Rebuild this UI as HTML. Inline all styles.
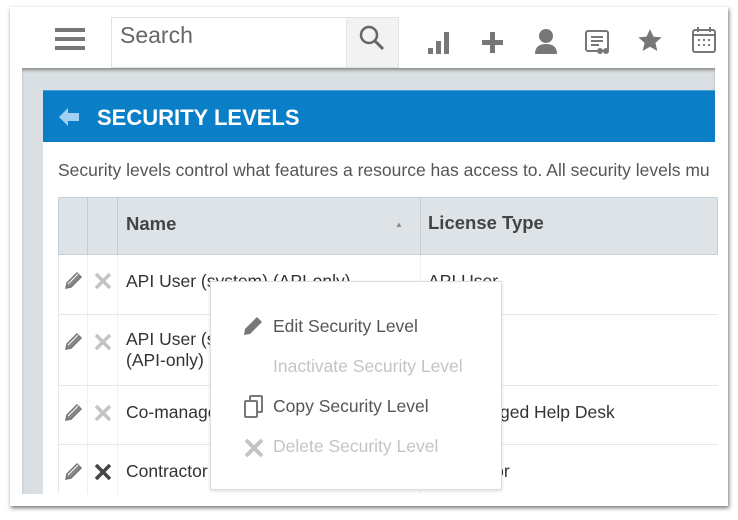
<!DOCTYPE html>
<html><head><meta charset="utf-8"><style>
*{margin:0;padding:0;box-sizing:border-box}
body{width:738px;height:520px;background:#fff;font-family:"Liberation Sans",sans-serif;position:relative;overflow:hidden}
.frame{position:absolute;left:10px;top:7px;width:718px;height:499px;background:#fff;box-shadow:1px 2px 4px rgba(0,0,0,.55);overflow:hidden}
.abs{position:absolute}
.ic{position:absolute}
.row{position:absolute;left:48px;width:660px;border-bottom:1px solid #e4e8ea}
.t{position:absolute;font-size:17.5px;color:#333;white-space:nowrap}
.menu div{position:absolute;font-size:17.5px;white-space:nowrap}
</style></head><body>
<div class="frame">
 <div class="abs" style="left:45px;top:21px;width:30px;height:4px;background:#777"></div>
 <div class="abs" style="left:45px;top:30px;width:30px;height:4px;background:#777"></div>
 <div class="abs" style="left:45px;top:39px;width:30px;height:4px;background:#777"></div>
 <div class="abs" style="left:101px;top:10px;width:288px;height:51px;border:1px solid #e2e2e2;background:#fff"></div>
 <div class="abs" style="left:336px;top:11px;width:52px;height:49px;background:#f2f2f2;border-left:1px solid #e6e6e6"></div>
 <div class="abs" style="left:110px;top:15px;font-size:23px;color:#666">Search</div>
 <svg class="ic" style="left:347px;top:16px" width="30" height="30" viewBox="0 0 30 30"><circle cx="12" cy="12" r="8" fill="none" stroke="#666" stroke-width="2.5"/><line x1="18" y1="18" x2="26" y2="26" stroke="#666" stroke-width="3"/></svg>
 <svg class="ic" style="left:416px;top:22px" width="28" height="28"><rect x="2" y="19" width="5" height="6" fill="#777"/><rect x="10" y="12" width="5" height="13" fill="#777"/><rect x="18" y="3" width="5" height="22" fill="#777"/></svg>
 <svg class="ic" style="left:470px;top:23px" width="26" height="26"><rect x="10" y="2" width="5" height="21" fill="#777"/><rect x="2" y="10" width="21" height="5" fill="#777"/></svg>
 <svg class="ic" style="left:522px;top:20px" width="28" height="30"><circle cx="14" cy="9" r="7" fill="#777"/><path d="M3 27 Q3 17 14 17 Q25 17 25 27Z" fill="#777"/></svg>
 <svg class="ic" style="left:574px;top:22px" width="28" height="28"><rect x="2" y="2" width="22" height="20" rx="2" fill="none" stroke="#777" stroke-width="2"/><line x1="7" y1="8" x2="19" y2="8" stroke="#777" stroke-width="2"/><line x1="7" y1="12" x2="19" y2="12" stroke="#777" stroke-width="2"/><line x1="7" y1="16" x2="15" y2="16" stroke="#777" stroke-width="2"/><circle cx="16" cy="22" r="3" fill="#777"/><circle cx="22" cy="22" r="3" fill="#777"/></svg>
 <svg class="ic" style="left:627px;top:21px" width="26" height="26" viewBox="0 0 24 24"><path d="M12 1l3.2 7 7.6.7-5.8 5 1.8 7.5L12 17.3 5.2 21.2 7 13.7 1.2 8.7l7.6-.7z" fill="#777"/></svg>
 <svg class="ic" style="left:681px;top:18px" width="28" height="30"><rect x="2" y="5" width="22" height="22" rx="2" fill="none" stroke="#777" stroke-width="2"/><line x1="2" y1="10" x2="24" y2="10" stroke="#777" stroke-width="2"/><rect x="6" y="2" width="2" height="5" fill="#777"/><rect x="18" y="2" width="2" height="5" fill="#777"/><g fill="#777"><rect x="7" y="14" width="2" height="2"/><rect x="12" y="14" width="2" height="2"/><rect x="17" y="14" width="2" height="2"/><rect x="7" y="19" width="2" height="2"/><rect x="12" y="19" width="2" height="2"/><rect x="17" y="19" width="2" height="2"/></g></svg>
 <div class="abs" style="left:12px;top:61px;width:693px;height:440px;background:#d9dfe2;box-shadow:inset 0 3px 3px -1px #888"></div>
 <div class="abs" style="left:33px;top:83px;width:672px;height:52px;background:#0a7fc7;border-top:1px solid #4aa0d6"></div>
 <svg class="ic" style="left:47px;top:99px" width="24" height="22"><path d="M2 11 L11 2 L11 7 L22 7 L22 15 L11 15 L11 20Z" fill="#9fd0ef"/></svg>
 <div class="abs" style="left:87px;top:98px;font-size:22px;font-weight:bold;color:#fff;white-space:nowrap">SECURITY LEVELS</div>
 <div class="abs" style="left:33px;top:135px;width:672px;height:366px;background:#fff"></div>
 <div class="abs" style="left:48px;top:153px;font-size:17.5px;color:#555;white-space:nowrap">Security levels control what features a resource has access to. All security levels mu</div>
 <div class="abs" style="left:48px;top:190px;width:660px;height:58px;background:#dde3e6;border:1px solid #c9d0d4"></div>
 <div class="abs" style="left:77px;top:190px;width:1px;height:58px;background:#c5ccd0"></div>
 <div class="abs" style="left:107px;top:190px;width:1px;height:58px;background:#c5ccd0"></div>
 <div class="abs" style="left:410px;top:190px;width:1px;height:58px;background:#c5ccd0"></div>
 <div class="abs" style="left:116px;top:206px;font-size:18.5px;font-weight:bold;color:#444">Name</div>
 <div class="abs" style="left:385px;top:213px;font-size:8px;color:#888">▲</div>
 <div class="abs" style="left:418px;top:205px;font-size:18.5px;font-weight:bold;color:#444;white-space:nowrap">License Type</div>
 <div class="abs" style="left:48px;top:248px;width:1px;height:253px;background:#e4e8ea"></div>
 <div class="abs" style="left:77px;top:248px;width:1px;height:253px;background:#eef0f1"></div>
 <div class="abs" style="left:107px;top:248px;width:1px;height:253px;background:#eef0f1"></div>
 <div class="abs" style="left:410px;top:248px;width:1px;height:253px;background:#eef0f1"></div>
 <div class="row" style="top:248px;height:60px"></div>
 <div class="row" style="top:308px;height:71px"></div>
 <div class="row" style="top:379px;height:59px"></div>
 <div class="t" style="left:116px;top:264px">API User (system) (API-only)</div>
 <div class="t" style="left:418px;top:264px">API User</div>
 <div class="t" style="left:116px;top:322px;line-height:21px">API User (system)<br>(API-only)</div>
 <div class="t" style="left:116px;top:395px">Co-managed Help Desk</div>
 <div class="t" style="left:418px;top:395px">Co-managed Help Desk</div>
 <div class="t" style="left:116px;top:454px">Contractor</div>
 <div class="t" style="left:418px;top:454px">Contractor</div>
 <svg class="ic" style="left:53px;top:264px" width="20" height="20"><path d="M3 17 L4 12 L14 2 L18 6 L8 16Z" fill="#888" stroke="#777" stroke-width="1.5"/><path d="M5 13 L15 3" stroke="#fff" stroke-width="1"/></svg>
 <svg class="ic" style="left:83px;top:264px" width="20" height="20"><path d="M3 3L17 17M17 3L3 17" stroke="#c4c4c4" stroke-width="3.5"/></svg>
 <svg class="ic" style="left:53px;top:325px" width="20" height="20"><path d="M3 17 L4 12 L14 2 L18 6 L8 16Z" fill="#888" stroke="#777" stroke-width="1.5"/><path d="M5 13 L15 3" stroke="#fff" stroke-width="1"/></svg>
 <svg class="ic" style="left:83px;top:325px" width="20" height="20"><path d="M3 3L17 17M17 3L3 17" stroke="#c4c4c4" stroke-width="3.5"/></svg>
 <svg class="ic" style="left:53px;top:396px" width="20" height="20"><path d="M3 17 L4 12 L14 2 L18 6 L8 16Z" fill="#888" stroke="#777" stroke-width="1.5"/><path d="M5 13 L15 3" stroke="#fff" stroke-width="1"/></svg>
 <svg class="ic" style="left:83px;top:396px" width="20" height="20"><path d="M3 3L17 17M17 3L3 17" stroke="#c4c4c4" stroke-width="3.5"/></svg>
 <svg class="ic" style="left:53px;top:455px" width="20" height="20"><path d="M3 17 L4 12 L14 2 L18 6 L8 16Z" fill="#888" stroke="#777" stroke-width="1.5"/><path d="M5 13 L15 3" stroke="#fff" stroke-width="1"/></svg>
 <svg class="ic" style="left:83px;top:455px" width="20" height="20"><path d="M3 3L17 17M17 3L3 17" stroke="#444" stroke-width="3.5"/></svg>
 <div class="abs" style="left:0;top:487px;width:718px;height:12px;background:#fff"></div>
 <div class="menu abs" style="left:200px;top:274px;width:292px;height:209px;background:#fff;border:1px solid #ddd;box-shadow:0 1px 3px rgba(0,0,0,.15)">
  <svg class="ic" style="left:30px;top:32px" width="24" height="24"><path d="M3 21 L4 15 L16 3 L21 8 L9 20Z" fill="#777"/></svg>
  <div style="left:62px;top:34px;color:#555">Edit Security Level</div>
  <div style="left:62px;top:74px;color:#c4c4c4">Inactivate Security Level</div>
  <svg class="ic" style="left:32px;top:112px" width="22" height="26"><rect x="7" y="2" width="12" height="16" rx="1" fill="none" stroke="#777" stroke-width="2"/><rect x="2" y="7" width="12" height="16" rx="1" fill="#fff" stroke="#777" stroke-width="2"/></svg>
  <div style="left:62px;top:114px;color:#555">Copy Security Level</div>
  <svg class="ic" style="left:32px;top:155px" width="22" height="22"><path d="M3 3L19 19M19 3L3 19" stroke="#c4c4c4" stroke-width="4"/></svg>
  <div style="left:62px;top:154px;color:#c4c4c4">Delete Security Level</div>
 </div>
</div>
</body></html>
